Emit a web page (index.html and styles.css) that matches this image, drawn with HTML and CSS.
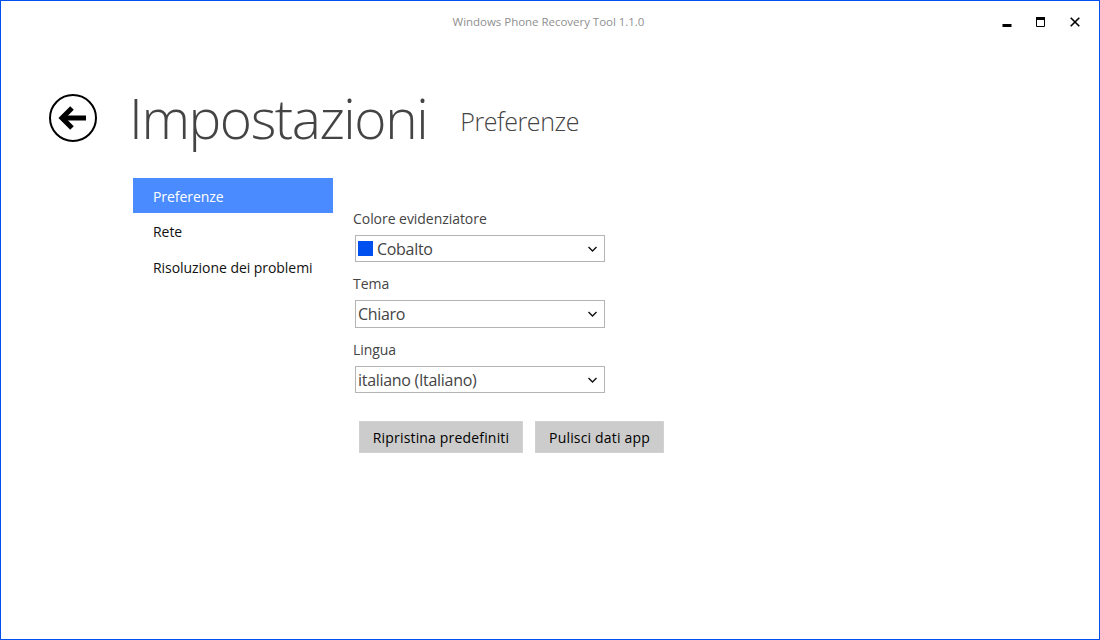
FILE: index.html
```html
<!DOCTYPE html>
<html lang="it">
<head>
<meta charset="utf-8">
<title>Windows Phone Recovery Tool</title>
<link rel="stylesheet" href="styles.css">
</head>
<body>
<div class="window">
  <header class="titlebar">
    <div class="app-title">Windows Phone Recovery Tool 1.1.0</div>
    <div class="controls">
      <svg class="ctl" width="10" height="10" viewBox="0 0 10 10"><rect x="0.5" y="7" width="9" height="3" fill="#000"/></svg>
      <svg class="ctl" width="10" height="10" viewBox="0 0 10 10"><path d="M.5 1.500h8v8h-8z" fill="none" stroke="#000"/><rect x="0" y="0" width="9" height="3" fill="#000"/></svg>
      <svg class="ctl" width="10" height="10" viewBox="0 0 10 10"><path d="M.7.7l8.600 8.600M9.300.7L.7 9.300" fill="none" stroke="#000" stroke-width="1.600"/></svg>
    </div>
  </header>
  <section class="heading">
    <svg class="back" width="48" height="48" viewBox="0 0 48 48">
      <circle cx="24" cy="24" r="23" fill="none" stroke="#000" stroke-width="2"/>
      <path d="M37 24H15" fill="none" stroke="#000" stroke-width="5"/>
      <path d="M23 14L13 24 23 34" fill="none" stroke="#000" stroke-width="5"/>
    </svg>
    <h1 class="page-title">Impostazioni</h1>
    <h2 class="page-sub">Preferenze</h2>
  </section>
  <main class="content">
    <nav class="nav">
      <a class="nav-item active">Preferenze</a>
      <a class="nav-item">Rete</a>
      <a class="nav-item">Risoluzione dei problemi</a>
    </nav>
    <div class="form">
      <div class="field">
        <label class="label">Colore evidenziatore</label>
        <div class="select"><span class="swatch"></span><span class="value">Cobalto</span>
          <svg class="chev" width="9" height="6" viewBox="0 0 9 6"><path d="M.5 1L4.500 5 8.500 1" fill="none" stroke="#111" stroke-width="1.400"/></svg></div>
      </div>
      <div class="field">
        <label class="label">Tema</label>
        <div class="select select-tall"><span class="value">Chiaro</span>
          <svg class="chev" width="9" height="6" viewBox="0 0 9 6"><path d="M.5 1L4.500 5 8.500 1" fill="none" stroke="#111" stroke-width="1.400"/></svg></div>
      </div>
      <div class="field">
        <label class="label">Lingua</label>
        <div class="select"><span class="value">italiano (Italiano)</span>
          <svg class="chev" width="9" height="6" viewBox="0 0 9 6"><path d="M.5 1L4.500 5 8.500 1" fill="none" stroke="#111" stroke-width="1.400"/></svg></div>
      </div>
      <div class="buttons">
        <button class="btn btn-a">Ripristina predefiniti</button>
        <button class="btn btn-b">Pulisci dati app</button>
      </div>
    </div>
  </main>
</div>
</body>
</html>
```
FILE: styles.css
```css
* { box-sizing: border-box; }
html, body { margin: 0; padding: 0; background: #fff; }
body { font-family: "Open Sans", "Noto Sans", sans-serif; color: #333; }
.window {
  width: 1100px; height: 640px; overflow: hidden;
  border: 1px solid #0050ef; background: #fff;
  display: flex; flex-direction: column;
}
.titlebar { height: 42px; display: flex; justify-content: center; position: relative; flex: none; }
.app-title { font-size: 11.5px; letter-spacing: -0.03px; color: #8f8f8f; line-height: 16px; margin-top: 13px; margin-right: 3px; }
.controls { position: absolute; right: 19px; top: 16px; display: flex; gap: 24px; }
.ctl { display: block; }
.heading { display: flex; align-items: flex-start; height: 135px; padding-left: 48px; padding-top: 51px; flex: none; }
.back { flex: none; }
.page-title { margin: -6px 0 0 32px; font-weight: 300; font-size: 55px; letter-spacing: -1.45px; color: #444; line-height: 60px; }
.page-sub { margin: 12px 0 0 33px; font-weight: 300; font-size: 25px; letter-spacing: -0.4px; color: #444; line-height: 30px; }
.content { display: flex; padding-left: 132px; }
.nav { width: 200px; display: flex; flex-direction: column; flex: none; }
.nav-item { height: 36px; padding-left: 20px; font-size: 14px; letter-spacing: -0.05px; line-height: 37px; color: #111; }
.nav-item.active { height: 35px; background: #4a8bff; color: #fff; }
.form { margin-left: 20px; padding-top: 30px; width: 330px; }
.field { display: flex; flex-direction: column; margin-bottom: 11px; }
.label { font-size: 14px; letter-spacing: -0.05px; line-height: 21px; height: 17px; color: #444; margin-bottom: 10px; }
.select {
  width: 250px; height: 27px; margin-left: 2px;
  border: 1px solid #b4b4b4; display: flex; align-items: center; padding: 0 7px 0 2px;
}
.select-tall { height: 28px; }
.swatch { width: 15px; height: 15px; background: #0050ef; margin-right: 4px; flex: none; }
.value { font-size: 16px; letter-spacing: -0.3px; color: #444; flex: 1; }
.chev { flex: none; }
.buttons { display: flex; gap: 12px; margin-left: 6px; margin-top: 28px; }
.btn {
  height: 32px; border: 1px solid #d2d2d2; background: #ccc; color: #000; padding: 0;
  font-family: "Open Sans", sans-serif; font-size: 14px; font-weight: 500; letter-spacing: 0.17px;
}
.btn-a { width: 164px; }
.btn-b { width: 129px; }
```
